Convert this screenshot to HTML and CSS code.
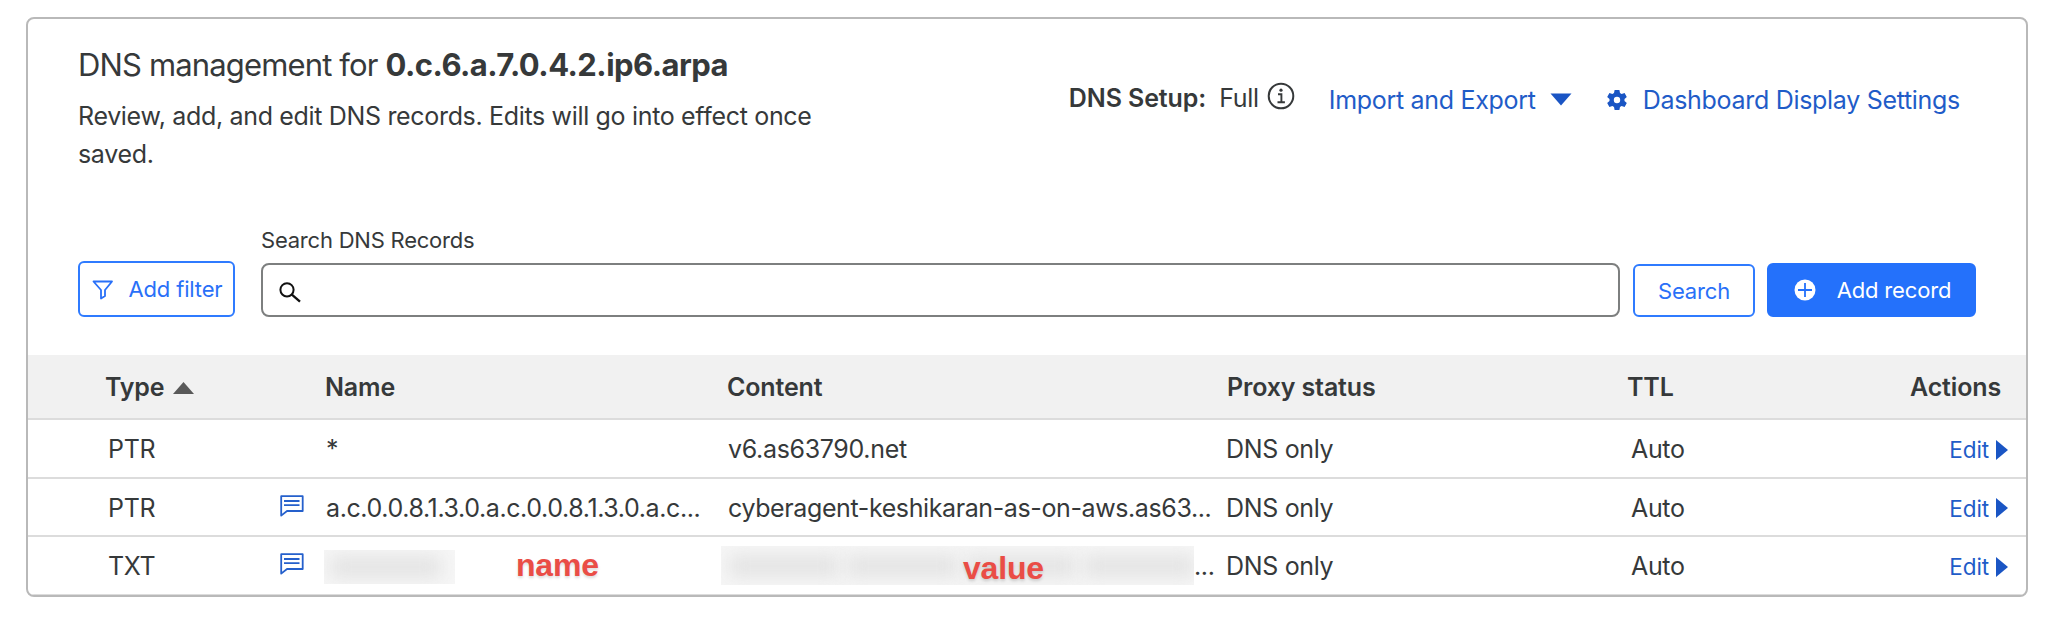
FILE: index.html
```html
<!DOCTYPE html>
<html lang="en">

<head>
    <meta charset="UTF-8">
    <meta name="viewport" content="width=device-width, initial-scale=1.0">
    <title>DNS management</title>
    <link rel="stylesheet" href="styles.css">
</head>

<body>
    <div class="panel">
        <div class="header">
            <div class="intro">
                <h1>DNS management for <strong>0.c.6.a.7.0.4.2.ip6.arpa</strong></h1>
                <p>Review, add, and edit DNS records. Edits will go into effect once saved.</p>
            </div>
            <div class="header-actions">
                <div class="setup">
                    <strong>DNS Setup:</strong>
                    <span>Full</span>
                    <svg width="28" height="28" viewBox="0 0 28 28" fill="none" stroke="#36393a">
                        <circle cx="14" cy="14" r="12.3" stroke-width="2" />
                        <path d="M11 12.2h3.4v7.6M10.5 20.3h7.4" stroke-width="1.9" />
                        <circle cx="14" cy="8.2" r="1.6" fill="#36393a" stroke="none" />
                    </svg>
                </div>
                <a href="#" class="link import">Import and Export
                    <svg width="22" height="13" viewBox="0 0 22 13"><path d="M0.5 0.5h21L11 12.5z" fill="#1a55c4" /></svg>
                </a>
                <a href="#" class="link display">
                    <svg width="20" height="22" viewBox="0 0 20 22">
                        <path fill="#1a55c4" fill-rule="evenodd" d="M7.6 1h4.8l.6 3.1 1.6 1 3-1.1 2.2 3.9-2.3 2.1v2l2.3 2.1-2.2 3.9-3-1.1-1.6 1-.6 3.1H7.6L7 17.9l-1.6-1-3 1.1-2.2-3.9L2.5 12v-2L.2 7.9 2.4 4l3 1.1 1.600-1zM10 7.800a3.200 3.200 0 1 0 0 6.400 3.200 3.200 0 0 0 0-6.400z" />
                    </svg>
                    Dashboard Display Settings
                </a>
            </div>
        </div>

        <form class="toolbar">
            <button type="button" class="btn btn-filter">
                <svg width="22" height="20" viewBox="0 0 22 20" fill="none" stroke="#2970f8" stroke-width="1.8" stroke-linejoin="round">
                    <path d="M1.5 1.5h18.5L13 10v6l-4 2.5V10z" />
                </svg>
                Add filter
            </button>
            <div class="search-field">
                <label for="search">Search DNS Records</label>
                <div class="search-box">
                    <svg width="22" height="21" viewBox="0 0 22 21" fill="none" stroke="#111" stroke-width="2">
                        <circle cx="8" cy="7.8" r="6.6" />
                        <path d="M12.6 12.4l8.4 7.3" stroke-width="2.3" />
                    </svg>
                    <input type="text" id="search">
                </div>
            </div>
            <button type="button" class="btn btn-search">Search</button>
            <button type="button" class="btn btn-add">
                <svg width="22" height="22" viewBox="0 0 22 22">
                    <circle cx="11" cy="11" r="10.5" fill="#fff" />
                    <path d="M11 4v14M4 11h14" stroke="#2471fb" stroke-width="1.8" />
                </svg>
                Add record
            </button>
        </form>

        <div class="records">
            <div class="row head">
                <div>Type <svg width="21" height="12" viewBox="0 0 21 12"><path d="M0 12L10.5 0 21 12z" fill="#595959" /></svg></div>
                <div></div>
                <div>Name</div>
                <div>Content</div>
                <div>Proxy status</div>
                <div>TTL</div>
                <div class="actions">Actions</div>
            </div>
            <div class="row">
                <div class="type">PTR</div>
                <div class="note"></div>
                <div class="name">*</div>
                <div class="content">v6.as63790.net</div>
                <div class="proxy">DNS only</div>
                <div class="ttl">Auto</div>
                <div class="edit"><a href="#">Edit</a><svg width="12" height="20" viewBox="0 0 12 20"><path d="M0 0l12 10L0 20z" fill="#1a55c4" /></svg></div>
            </div>
            <div class="row">
                <div class="type">PTR</div>
                <div class="note">
                    <svg width="24" height="22" viewBox="0 0 24 22" fill="none" stroke="#2560cc" stroke-width="1.8" stroke-linejoin="round">
                        <path d="M1.2 1.2h21.5v14.8H7L1.2 20.6z" />
                        <path d="M4 6h15.5M4 10.2h15.5" />
                    </svg>
                </div>
                <div class="name long">a.c.0.0.8.1.3.0.a.c.0.0.8.1.3.0.a.c...</div>
                <div class="content long">cyberagent-keshikaran-as-on-aws.as63...</div>
                <div class="proxy">DNS only</div>
                <div class="ttl">Auto</div>
                <div class="edit"><a href="#">Edit</a><svg width="12" height="20" viewBox="0 0 12 20"><path d="M0 0l12 10L0 20z" fill="#1a55c4" /></svg></div>
            </div>
            <div class="row">
                <div class="type">TXT</div>
                <div class="note">
                    <svg width="24" height="22" viewBox="0 0 24 22" fill="none" stroke="#2560cc" stroke-width="1.8" stroke-linejoin="round">
                        <path d="M1.2 1.2h21.5v14.8H7L1.2 20.6z" />
                        <path d="M4 6h15.5M4 10.2h15.5" />
                    </svg>
                </div>
                <div class="name">
                    <div class="redacted redacted-name"><i></i></div>
                    <span class="mark">name</span>
                </div>
                <div class="content">
                    <div class="redacted redacted-value">
                        <i></i><i></i><i></i><i></i>
                        <span class="mark">value</span>
                    </div>
                    <span>...</span>
                </div>
                <div class="proxy">DNS only</div>
                <div class="ttl">Auto</div>
                <div class="edit"><a href="#">Edit</a><svg width="12" height="20" viewBox="0 0 12 20"><path d="M0 0l12 10L0 20z" fill="#1a55c4" /></svg></div>
            </div>
        </div>
    </div>
</body>

</html>
```
FILE: styles.css
```css
* {
    margin: 0;
    padding: 0;
    box-sizing: border-box;
}

body {
    font-family: Inter, "Liberation Sans", sans-serif;
    font-size: 25px;
    letter-spacing: -0.33px;
    color: #36393a;
    background: #fff;
    padding: 17px 20px 0 26px;
}

svg {
    display: block;
    flex: none;
}

a {
    color: #1f5cc8;
    text-decoration: none;
}

strong {
    font-weight: 600;
}

.panel {
    height: 580px;
    border: 2px solid #b9b9b9;
    border-radius: 8px;
    overflow: hidden;
}

.header {
    display: flex;
    justify-content: space-between;
    height: 209px;
    padding: 26px 66px 0 50px;
}

.intro {
    width: 760px;
}

h1 {
    font-size: 31px;
    font-weight: 400;
    line-height: 40px;
    letter-spacing: -0.85px;
    margin-bottom: 12px;
    white-space: nowrap;
}

h1 strong {
    font-weight: 700;
    letter-spacing: -0.54px;
}

.intro p {
    line-height: 38px;
}

.header-actions {
    display: flex;
    height: 40px;
    margin-top: 33px;
    line-height: 40px;
    letter-spacing: -0.3px;
    white-space: nowrap;
}

.setup {
    display: flex;
    align-items: center;
    margin-right: 34px;
}

.setup strong {
    letter-spacing: -0.1px;
    margin-right: 13px;
}

.setup svg {
    margin: -4px 0 0 8px;
}

.link {
    display: flex;
    align-items: center;
    margin-top: 3px;
}

.import svg {
    margin-left: 14px;
}

.display {
    margin-left: 35px;
}

.display svg {
    margin-right: 16px;
}

.toolbar {
    display: flex;
    align-items: flex-end;
    height: 127px;
    padding: 0 50px 38px;
    font-size: 22px;
}

.btn {
    display: flex;
    align-items: center;
    justify-content: center;
    font: inherit;
    letter-spacing: -0.15px;
    color: #2970f8;
    background: #fff;
    border: 2px solid #2f7bff;
    border-radius: 6px;
    white-space: nowrap;
}

.btn-filter {
    width: 157px;
    height: 56px;
    margin-right: 26px;
    padding-left: 2px;
}

.btn-filter svg {
    margin: 1px 14px 0 0;
}

.btn-search {
    width: 122px;
    height: 53px;
    margin: 0 12px 0 13px;
}

.btn-add {
    width: 209px;
    height: 54px;
    padding-left: 2px;
    color: #fff;
    background: #2471fb;
    border-color: #2471fb;
}

.btn-add svg {
    margin-right: 21px;
}

.search-field {
    flex: 1;
}

.search-field label {
    display: block;
    line-height: 24px;
    margin-bottom: 11px;
    letter-spacing: -0.22px;
}

.search-box {
    display: flex;
    align-items: center;
    height: 54px;
    padding: 4px 16px 0;
    border: 2px solid #7d7f7f;
    border-radius: 8px;
}

.search-box input {
    flex: 1;
    height: 40px;
    padding-left: 10px;
    font: inherit;
    border: none;
    outline: none;
}

.row {
    display: grid;
    grid-template-columns: 172px 46px 402px 500px 401px 200px 1fr;
    align-items: center;
    height: 58.5px;
    padding: 2px 18px 0 78px;
    border-bottom: 2px solid #dcdcdc;
    white-space: nowrap;
}

.row > div {
    display: flex;
    align-items: center;
}

.head {
    height: 65px;
    padding: 1px 18px 0 77px;
    grid-template-columns: 173px 47px 402px 500px 400px 200px 1fr;
    font-weight: 600;
    letter-spacing: -0.15px;
    background: #f1f1f1;
}

.head svg {
    margin: 2px 0 0 9px;
}

.head .actions {
    justify-content: flex-end;
    padding-right: 7px;
}

.row .type {
    padding-left: 2px;
}

.row .note {
    padding: 0 0 4px 2px;
}

.row .name,
.row .content {
    padding-left: 2px;
}

.row .long {
    letter-spacing: -0.39px;
}

.row .ttl {
    padding-left: 4px;
}

.edit {
    justify-content: flex-end;
    font-size: 22.5px;
    letter-spacing: -0.1px;
    padding-top: 1px;
}

.edit svg {
    margin-left: 7px;
}

/* hidden values */
.redacted {
    position: relative;
    display: flex;
    align-items: center;
    background: #f6f6f6;
}

.redacted i {
    height: 20px;
    background: #e2e2e2;
    filter: blur(9px);
}

.redacted-name {
    width: 131px;
    height: 34px;
    margin: 1px 61px 0 -2px;
    padding: 0 14px 0 6px;
    overflow: hidden;
}

.redacted-name i {
    width: 100%;
}

.redacted-value {
    width: 473px;
    height: 39px;
    margin: -1px 0 0 -7px;
    padding: 0 0 0 8px;
    gap: 8px;
    overflow: hidden;
}

.redacted-value i {
    flex: 1;
}

.mark {
    font-family: "Liberation Sans", Arial, sans-serif;
    font-size: 32px;
    font-weight: bold;
    line-height: 32px;
    letter-spacing: -0.2px;
    color: #ea4d46;
    text-shadow: 0 2px 3px rgba(0, 0, 0, 0.15);
}

.name .mark {
    margin-top: -2px;
}

.redacted-value .mark {
    position: absolute;
    left: 242px;
    top: 6px;
}
```
